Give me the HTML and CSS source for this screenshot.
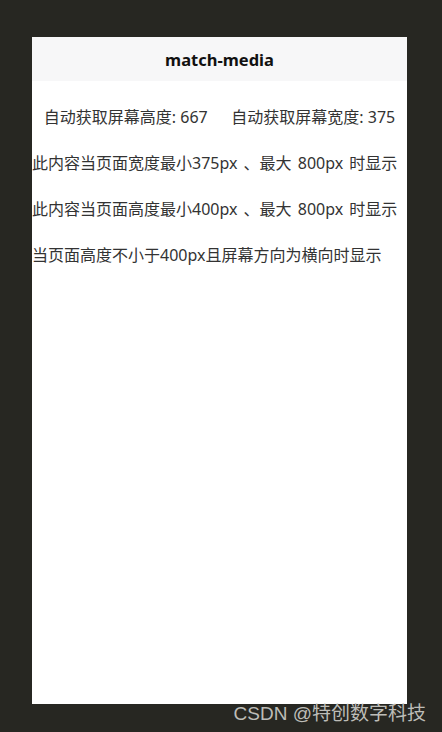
FILE: index.html
```html
<!DOCTYPE html>
<html lang="zh-CN">
<head>
<meta charset="utf-8">
<title>match-media</title>
<link rel="stylesheet" href="styles.css">
</head>
<body>
<div class="phone">
  <div class="navbar">match-media</div>
  <div class="content">
    <div class="row row-split">
      <span>自动获取屏幕高度: 667</span>
      <span>自动获取屏幕宽度: 375</span>
    </div>
    <div class="row">此内容当页面宽度最小375px 、最大 800px 时显示</div>
    <div class="row">此内容当页面高度最小400px 、最大 800px 时显示</div>
    <div class="row">当页面高度不小于400px且屏幕方向为横向时显示</div>
  </div>
</div>
<div class="watermark">CSDN @特创数字科技</div>
</body>
</html>
```

FILE: styles.css
```css
html, body {
  margin: 0;
  padding: 0;
}
body {
  background: #272722;
  width: 442px;
  height: 732px;
  overflow: hidden;
  position: relative;
  font-family: "Noto Sans", "Noto Sans CJK SC", sans-serif;
  padding: 37px 0 0 32px;
  box-sizing: border-box;
}
.phone {
  width: 375px;
  height: 667px;
  background: #ffffff;
  display: flex;
  flex-direction: column;
}
.navbar {
  height: 44px;
  background: #f7f7f8;
  display: flex;
  align-items: center;
  justify-content: center;
  font-size: 16.5px;
  font-weight: 700;
  color: #111;
}
.content {
  padding-top: 13px;
  display: flex;
  flex-direction: column;
}
.row {
  height: 46px;
  line-height: 46px;
  font-size: 16px;
  color: #333;
  white-space: nowrap;
  word-spacing: 2px;
}
.row-split {
  display: flex;
  justify-content: space-around;
  word-spacing: 0;
}
.watermark {
  position: absolute;
  right: 16px;
  bottom: 7px;
  font-size: 19px;
  color: #bdbdb8;
  font-family: "Liberation Sans", "Noto Sans CJK SC", sans-serif;
}
```
